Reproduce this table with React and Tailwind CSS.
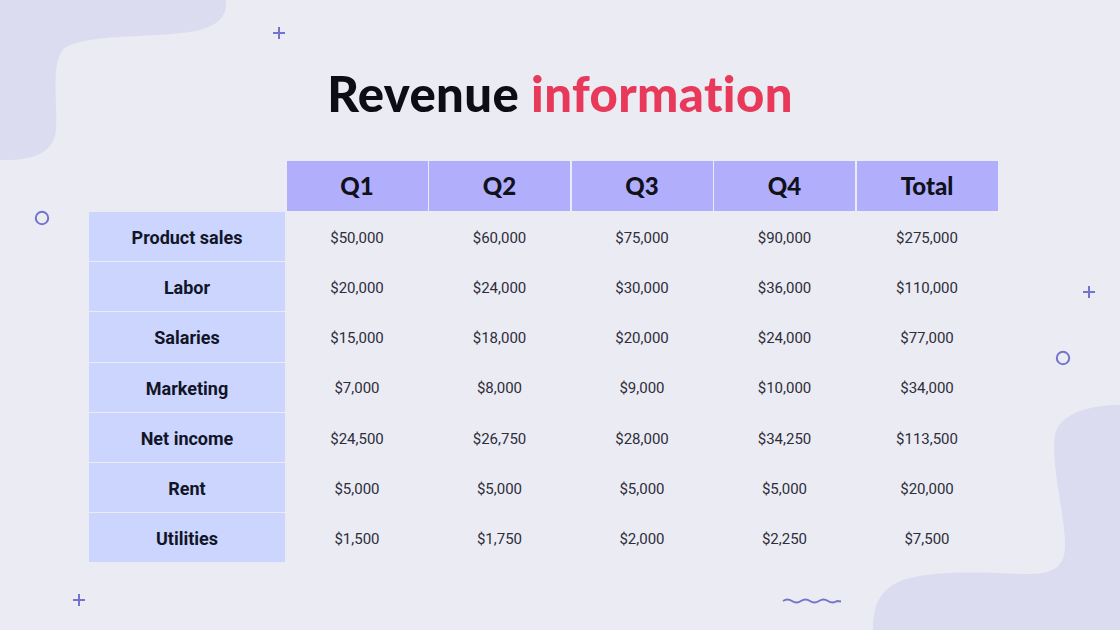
import React from 'react'

const rows = [
  ['Product sales', '$50,000', '$60,000', '$75,000', '$90,000', '$275,000'],
  ['Labor', '$20,000', '$24,000', '$30,000', '$36,000', '$110,000'],
  ['Salaries', '$15,000', '$18,000', '$20,000', '$24,000', '$77,000'],
  ['Marketing', '$7,000', '$8,000', '$9,000', '$10,000', '$34,000'],
  ['Net income', '$24,500', '$26,750', '$28,000', '$34,250', '$113,500'],
  ['Rent', '$5,000', '$5,000', '$5,000', '$5,000', '$20,000'],
  ['Utilities', '$1,500', '$1,750', '$2,000', '$2,250', '$7,500'],
]

const heads = ['Q1', 'Q2', 'Q3', 'Q4', 'Total']

const Plus = ({ className }) => (
  <svg viewBox="0 0 14 14" className={className}>
    <path d="M7 1v12M1 7h12" stroke="#7373cc" strokeWidth="2" fill="none" />
  </svg>
)

const Ring = ({ className }) => (
  <svg viewBox="0 0 16 16" className={className}>
    <circle cx="8" cy="8" r="6.2" stroke="#7373cc" strokeWidth="2" fill="none" />
  </svg>
)

const App = () => {
  return (
    <div className="relative w-[1120px] h-[630px] overflow-hidden bg-[#ebebf4]">

      {/* Blobs */}
      <svg viewBox="0 0 230 165" className="absolute left-0 top-0 w-[230px] h-[165px]">
        <path
          d="M0 0 H226 C228 18 215 28 190 32 C150 38 85 34 65 48 C50 60 58 100 56 130 C54 152 35 161 0 160 Z"
          fill="#dcdcf0"
        />
      </svg>
      <svg viewBox="0 0 260 230" className="absolute left-[860px] top-[400px] w-[260px] h-[230px]">
        <path
          d="M260 5 C232 5 200 12 195 35 C190 60 205 115 205 145 C205 170 190 175 160 174 C120 172 65 170 38 182 C18 192 13 208 13 230 H260 Z"
          fill="#dcdcf0"
        />
      </svg>

      {/* Decorations */}
      <Plus className="absolute left-[272px] top-[26px] w-[14px] h-[14px]" />
      <Plus className="absolute left-[1082px] top-[285px] w-[14px] h-[14px]" />
      <Plus className="absolute left-[72px] top-[593px] w-[14px] h-[14px]" />
      <Ring className="absolute left-[34px] top-[210px] w-[16px] h-[16px]" />
      <Ring className="absolute left-[1055px] top-[350px] w-[16px] h-[16px]" />
      <svg viewBox="0 0 60 6" className="absolute left-[782px] top-[598px] w-[60px] h-[6px]">
        <path
          d="M1 3 Q5.5 0 10 3 T19 3 T28 3 T37 3 T46 3 T55 3 L59 3.5"
          stroke="#7373cc"
          strokeWidth="1.8"
          fill="none"
        />
      </svg>

      {/* Title */}
      <h1
        className="relative pt-[69px] text-center text-[49px] leading-none font-black tracking-[0.4px] text-[#0d0d16]"
        style={{ fontFamily: 'Lato, sans-serif' }}
      >
        Revenue <span className="text-[#e8395b]">information</span>
      </h1>

      {/* Table */}
      <div className="relative mt-[43px] ml-[89px] grid grid-cols-[196px_repeat(5,141px)] gap-x-[1.5px] gap-y-px">
        <div className="h-[50px]" />
        {heads.map((h) => (
          <div
            key={h}
            className="h-[50px] bg-[#b1affc] flex items-center justify-center text-[24px] font-black text-[#11111c]"
            style={{ fontFamily: 'Lato, sans-serif' }}
          >
            {h}
          </div>
        ))}
        {rows.map((r) => (
          <React.Fragment key={r[0]}>
            <div
              className="h-[49.2px] pt-[2px] bg-[#cbd5fd] flex items-center justify-center text-[18px] font-bold text-[#121527]"
              style={{ fontFamily: 'Roboto, sans-serif' }}
            >
              {r[0]}
            </div>
            {r.slice(1).map((v, i) => (
              <div
                key={i}
                className="h-[49.2px] pt-[3px] flex items-center justify-center text-[15px] text-[#2e2e3a]"
                style={{ fontFamily: 'Roboto, sans-serif' }}
              >
                {v}
              </div>
            ))}
          </React.Fragment>
        ))}
      </div>
    </div>
  )
}

export default App
